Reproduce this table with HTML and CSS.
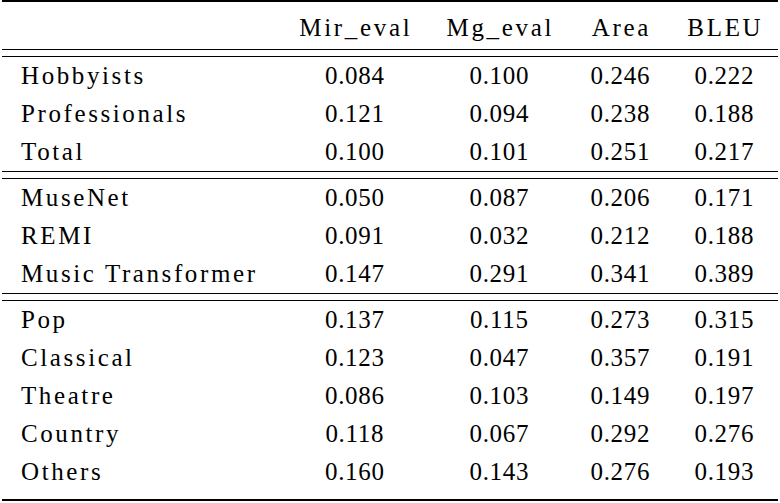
FILE: index.html
```html
<!DOCTYPE html>
<html>
<head>
<meta charset="utf-8">
<link rel="stylesheet" href="styles.css">
</head>
<body>
<div class="tbl">
  <div class="row head"><span class="lbl"></span><span class="hd">Mir_eval</span><span class="hd">Mg_eval</span><span class="hd">Area</span><span class="hd">BLEU</span></div>
  <div class="rule"></div>
  <div class="row"><span class="lbl">Hobbyists</span><span class="num">0.084</span><span class="num">0.100</span><span class="num">0.246</span><span class="num">0.222</span></div>
  <div class="row"><span class="lbl">Professionals</span><span class="num">0.121</span><span class="num">0.094</span><span class="num">0.238</span><span class="num">0.188</span></div>
  <div class="row"><span class="lbl">Total</span><span class="num">0.100</span><span class="num">0.101</span><span class="num">0.251</span><span class="num">0.217</span></div>
  <div class="rule"></div>
  <div class="row"><span class="lbl">MuseNet</span><span class="num">0.050</span><span class="num">0.087</span><span class="num">0.206</span><span class="num">0.171</span></div>
  <div class="row"><span class="lbl">REMI</span><span class="num">0.091</span><span class="num">0.032</span><span class="num">0.212</span><span class="num">0.188</span></div>
  <div class="row"><span class="lbl">Music Transformer</span><span class="num">0.147</span><span class="num">0.291</span><span class="num">0.341</span><span class="num">0.389</span></div>
  <div class="rule"></div>
  <div class="row"><span class="lbl">Pop</span><span class="num">0.137</span><span class="num">0.115</span><span class="num">0.273</span><span class="num">0.315</span></div>
  <div class="row"><span class="lbl">Classical</span><span class="num">0.123</span><span class="num">0.047</span><span class="num">0.357</span><span class="num">0.191</span></div>
  <div class="row"><span class="lbl">Theatre</span><span class="num">0.086</span><span class="num">0.103</span><span class="num">0.149</span><span class="num">0.197</span></div>
  <div class="row"><span class="lbl">Country</span><span class="num">0.118</span><span class="num">0.067</span><span class="num">0.292</span><span class="num">0.276</span></div>
  <div class="row"><span class="lbl">Others</span><span class="num">0.160</span><span class="num">0.143</span><span class="num">0.276</span><span class="num">0.193</span></div>
</div>
</body>
</html>
```
FILE: styles.css
```css
html, body {
  margin: 0;
  padding: 0;
  background: #fff;
}

.tbl {
  box-sizing: border-box;
  width: 776px;
  margin-left: 2px;
  border-top: 2px solid #000;
  border-bottom: 2px solid #000;
  padding: 8px 0;
  font-family: "Liberation Serif", "Times New Roman", serif;
  font-size: 25px;
  color: #000;
}

.row {
  display: grid;
  grid-template-columns: 279px 147px 142px 100px 108px;
  box-sizing: border-box;
  height: 38px;
  line-height: 35px;
  padding: 1px 0 2px;
  white-space: nowrap;
}

.head {
  padding: 0 0 3px;
  margin-bottom: 1px;
}

.lbl {
  padding-left: 19px;
  letter-spacing: 2.6px;
}

.hd {
  text-align: center;
  letter-spacing: 2.7px;
  padding-left: 2.7px;
}

.num {
  text-align: center;
  letter-spacing: 0.7px;
  padding-left: 0.7px;
}

.rule {
  height: 6px;
  border-top: 1px solid #000;
  border-bottom: 1px solid #000;
}
```
